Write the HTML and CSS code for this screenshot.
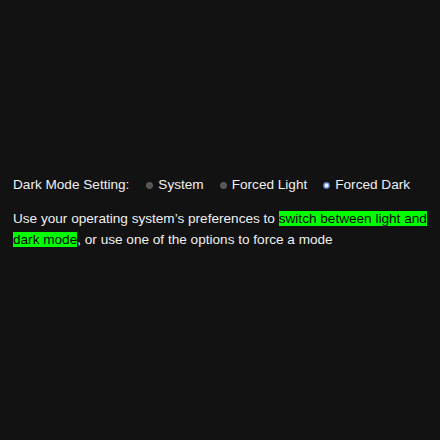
FILE: index.html
```html
<!DOCTYPE html>
<html>
<head>
<meta charset="utf-8">
<link rel="stylesheet" href="styles.css">
</head>
<body>
<main class="page">
  <div class="setting">
    <span class="label">Dark Mode Setting:</span>
    <span class="option"><span class="radio"></span>System</span>
    <span class="option"><span class="radio"></span>Forced Light</span>
    <span class="option"><span class="radio checked"></span>Forced Dark</span>
  </div>
  <p class="desc">Use your operating system’s preferences to <mark class="hl">switch between light and dark mode</mark>, or use one of the options to force a mode</p>
</main>
</body>
</html>
```
FILE: styles.css
```css
html, body {
  margin: 0;
  padding: 0;
  background: #121212;
}
body {
  width: 440px;
  height: 440px;
  font-family: "Liberation Sans", Arial, sans-serif;
  font-size: 13.6px;
  color: #f0f0f0;
}
.page {
  padding: 176px 13px 0 13px;
}
.setting {
  display: flex;
  align-items: center;
  height: 18px;
  line-height: 18px;
  white-space: nowrap;
}
.label {
  margin-right: 17px;
}
.option {
  display: flex;
  align-items: center;
  margin-right: 16px;
}
.radio {
  width: 7px;
  height: 7px;
  border-radius: 50%;
  background: #555555;
  box-sizing: border-box;
  border: 1px solid #666666;
  margin-right: 5px;
}
.radio.checked {
  background: radial-gradient(circle, #e4eeff 0 1.5px, #86aee8 2px);
  border: 1px solid #6f95d0;
}
.desc {
  margin: 14px 0 0 0;
  line-height: 21px;
  width: 414px;
}
.hl {
  background: #00ff00;
  color: #000;
}
```
